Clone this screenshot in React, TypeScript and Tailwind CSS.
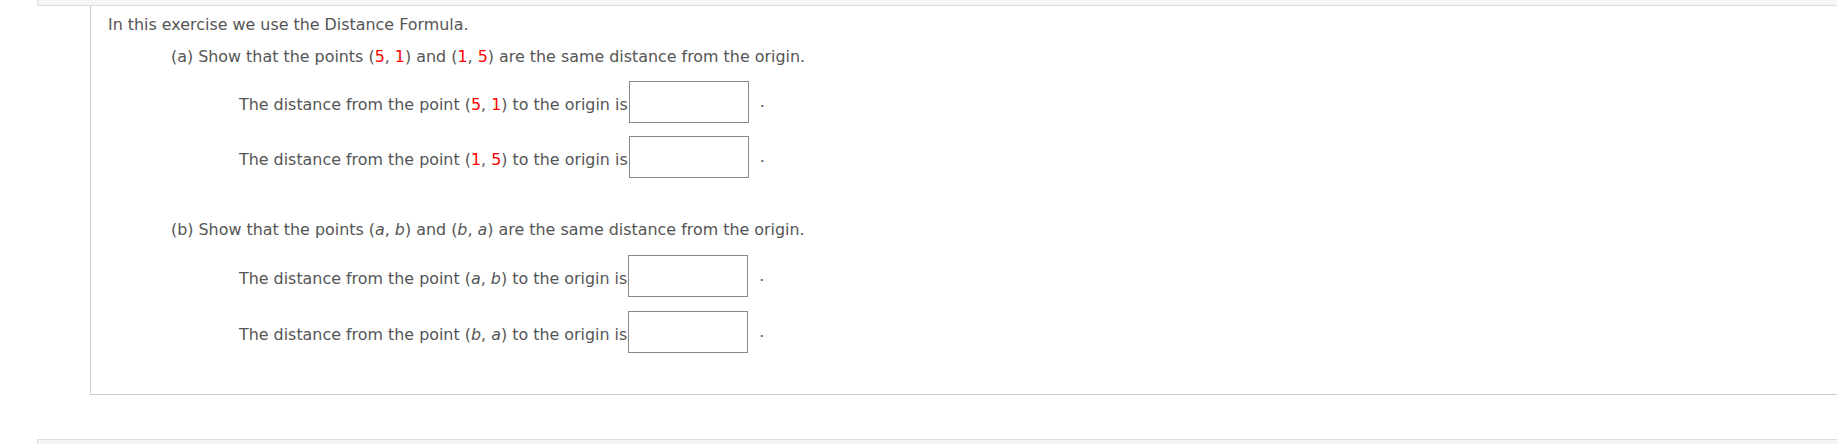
import React from 'react';

const font = { fontFamily: '"DejaVu Sans", Verdana, sans-serif' };

const Red: React.FC<{ children: React.ReactNode }> = ({ children }) => (
  <span className="text-[#ff0000]">{children}</span>
);

const Var: React.FC<{ children: React.ReactNode }> = ({ children }) => <i>{children}</i>;

const AnswerRow: React.FC<{ point: React.ReactNode; className?: string }> = ({ point, className }) => (
  <div className={`flex items-start ml-[131px] ${className ?? ''}`}>
    <span className="mt-[15px] leading-[18px] whitespace-nowrap">
      The distance from the point {point} to the origin is
    </span>
    <input
      type="text"
      className="ml-[1px] w-[120px] h-[42px] border border-[#888888] bg-white outline-none"
    />
    <span className="ml-[11px] mt-[12px] leading-[18px]">.</span>
  </div>
);

export default function App() {
  return (
    <div className="w-full h-[444px] bg-white overflow-hidden flex flex-col text-[15.9px] text-[#555555]" style={font}>
      <div className="ml-[37px] h-[6px] shrink-0 bg-[#f5f5f5] border-b border-l border-[#dddddd]" />

      <div className="flex shrink-0">
        <div className="ml-[90px] flex-1 h-[389px] border-l border-b border-[#cccccc] pl-[17px] pt-[10px]">
          <p className="leading-[18px] whitespace-nowrap">In this exercise we use the Distance Formula.</p>

          <div className="ml-[63px] mt-[14px]">
            <p className="leading-[18px] whitespace-nowrap">
              (a) Show that the points (<Red>5</Red>, <Red>1</Red>) and (<Red>1</Red>, <Red>5</Red>) are the same
              distance from the origin.
            </p>
          </div>
          <AnswerRow
            className="mt-[15px]"
            point={
              <>
                (<Red>5</Red>, <Red>1</Red>)
              </>
            }
          />
          <AnswerRow
            className="mt-[13px]"
            point={
              <>
                (<Red>1</Red>, <Red>5</Red>)
              </>
            }
          />

          <div className="ml-[63px] mt-[43px]">
            <p className="leading-[18px] whitespace-nowrap">
              (b) Show that the points (<Var>a</Var>, <Var>b</Var>) and (<Var>b</Var>, <Var>a</Var>) are the same
              distance from the origin.
            </p>
          </div>
          <AnswerRow
            className="mt-[16px]"
            point={
              <>
                (<Var>a</Var>, <Var>b</Var>)
              </>
            }
          />
          <AnswerRow
            className="mt-[14px]"
            point={
              <>
                (<Var>b</Var>, <Var>a</Var>)
              </>
            }
          />
        </div>
      </div>

      <div className="mt-[44px] ml-[37px] flex-1 bg-[#f5f5f5] border-t border-l border-[#dddddd]" />
    </div>
  );
}
